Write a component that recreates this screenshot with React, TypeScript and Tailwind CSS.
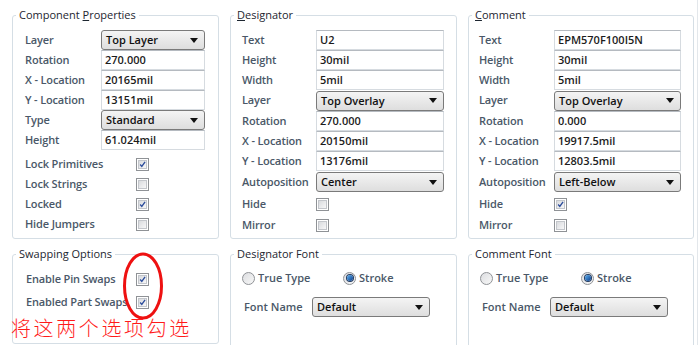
import type { ReactNode } from 'react';

function Field({ value }: { value: string }) {
  return (
    <div className="h-[20px] w-full border border-[#d6dbe0] border-t-[#b5bac0] bg-white px-[3px] text-[11px] leading-[18px] font-semibold text-[#1c1c1c]">
      {value}
    </div>
  );
}

function Dropdown({ value, width }: { value: string; width?: string }) {
  return (
    <div
      className={`flex h-[20px] items-center justify-between rounded-[3px] border border-[#7a7a7a] bg-gradient-to-b from-[#f4f4f4] to-[#dedede] pl-[4px] pr-[6px] text-[11px] font-semibold text-[#111] ${width ?? 'w-full'}`}
    >
      <span className="leading-[18px]">{value}</span>
      <svg width="8" height="5" viewBox="0 0 8 5">
        <path d="M0 0 H8 L4 5 Z" fill="#111" />
      </svg>
    </div>
  );
}

function Check({ checked }: { checked?: boolean }) {
  return (
    <div className="flex h-[13px] w-[13px] items-center justify-center border border-[#8f9296] bg-white">
      <div className="flex h-[9px] w-[9px] items-center justify-center border border-[#c3c6cb] bg-gradient-to-br from-[#d9dbde] to-[#f7f7f8]">
        {checked && (
          <svg width="9" height="9" viewBox="0 0 9 9">
            <path d="M1.5 4.5 L3.6 7 L7.8 1" fill="none" stroke="#2b4c9b" strokeWidth="1.7" />
          </svg>
        )}
      </div>
    </div>
  );
}

function Radio({ checked }: { checked?: boolean }) {
  return (
    <div className="flex h-[13px] w-[13px] items-center justify-center rounded-full border border-[#8f9296] bg-gradient-to-br from-[#dcdde0] to-[#f8f8f8]">
      {checked && <div className="h-[6px] w-[6px] rounded-full bg-gradient-to-br from-[#5eb0f0] to-[#0e3f8c] ring-1 ring-[#233a5e]" />}
    </div>
  );
}

function Row({ label, labelW, h = 'h-[20px]', children }: { label: string; labelW: string; h?: string; children: ReactNode }) {
  return (
    <div className={`flex items-center ${h}`}>
      <span className={`shrink-0 text-[11px] font-semibold tracking-[-0.15px] text-[#4a5868] ${labelW}`}>{label}</span>
      <div className="flex-1">{children}</div>
    </div>
  );
}

function Group({ title, className, inner, children }: { title: ReactNode; className: string; inner: string; children: ReactNode }) {
  return (
    <fieldset className={`shrink-0 rounded-[3px] border border-[#d5dee5] ${className}`}>
      <legend className="ml-[3px] px-[3px] text-[11px] leading-[16px] text-[#1d2630]">{title}</legend>
      <div className={inner}>{children}</div>
    </fieldset>
  );
}

function CheckRow({ label, labelW, checked, h = 'h-[20px]' }: { label: string; labelW: string; checked?: boolean; h?: string }) {
  return (
    <div className={`flex items-center ${h}`}>
      <span className={`shrink-0 text-[11px] font-semibold tracking-[-0.15px] text-[#4a5868] ${labelW}`}>{label}</span>
      <Check checked={checked} />
    </div>
  );
}

function FontGroup({ title, strokeX, ddW }: { title: string; strokeX: string; ddW: string }) {
  return (
    <Group title={title} className="mt-[7px] h-[120px]" inner="pl-[11px] pr-[12px] pt-[6px]">
      <div className="flex h-[20px] items-center text-[11px] font-semibold text-[#4a5868]">
        <div className={`flex items-center gap-[3px] ${strokeX}`}>
          <Radio />
          <span>True Type</span>
        </div>
        <div className="flex items-center gap-[3px]">
          <Radio checked />
          <span>Stroke</span>
        </div>
      </div>
      <div className="mt-[9px] flex h-[20px] items-center pl-[2px]">
        <span className="w-[68px] shrink-0 text-[11px] font-semibold text-[#4a5868]">Font Name</span>
        <Dropdown value="Default" width={ddW} />
      </div>
    </Group>
  );
}

function TextGroup({ title, values, pl, labelW }: { title: ReactNode; values: string[]; pl: string; labelW: string }) {
  const [text, height, width, rot, x, y, auto, hide] = values;
  return (
    <Group title={title} className="h-[232px]" inner={`${pl} pr-[12px] pt-[7px]`}>
      <Row label="Text" labelW={labelW}><Field value={text} /></Row>
      <Row label="Height" labelW={labelW}><Field value={height} /></Row>
      <Row label="Width" labelW={labelW}><Field value={width} /></Row>
      <Row label="Layer" labelW={labelW} h="h-[21px]"><Dropdown value="Top Overlay" /></Row>
      <Row label="Rotation" labelW={labelW}><Field value={rot} /></Row>
      <Row label="X - Location" labelW={labelW}><Field value={x} /></Row>
      <Row label="Y - Location" labelW={labelW}><Field value={y} /></Row>
      <Row label="Autoposition" labelW={labelW} h="h-[22px]"><Dropdown value={auto} /></Row>
      <div className="mt-[1px]">
        <CheckRow label="Hide" labelW={labelW} checked={hide === 'y'} h="h-[21px]" />
        <CheckRow label="Mirror" labelW={labelW} h="h-[21px]" />
      </div>
    </Group>
  );
}

export default function App() {
  return (
    <div className="relative h-[345px] w-[700px] overflow-hidden bg-white font-['Open_Sans','Noto_Sans_CJK_SC',sans-serif]">
      <div className="flex h-full w-[698px] gap-[11px] border-r border-[#e3e7eb] pl-[12px] pt-[7px]">
        {/* column 1 */}
        <div className="flex w-[207px] shrink-0 flex-col">
          <Group title={<>Component <u>P</u>roperties</>} className="h-[232px]" inner="pl-[12px] pr-[13px] pt-[7px]">
            <Row label="Layer" labelW="w-[76px]"><Dropdown value="Top Layer" /></Row>
            <Row label="Rotation" labelW="w-[76px]"><Field value="270.000" /></Row>
            <Row label="X - Location" labelW="w-[76px]"><Field value="20165mil" /></Row>
            <Row label="Y - Location" labelW="w-[76px]"><Field value="13151mil" /></Row>
            <Row label="Type" labelW="w-[76px]"><Dropdown value="Standard" /></Row>
            <Row label="Height" labelW="w-[76px]"><Field value="61.024mil" /></Row>
            <div className="mt-[4px]">
              <CheckRow label="Lock Primitives" labelW="w-[111px]" checked />
              <CheckRow label="Lock Strings" labelW="w-[111px]" />
              <CheckRow label="Locked" labelW="w-[111px]" checked />
              <CheckRow label="Hide Jumpers" labelW="w-[111px]" />
            </div>
          </Group>
          <Group title="Swapping Options" className="mt-[7px] h-[98px]" inner="pl-[13px] pt-[7px]">
            <CheckRow label="Enable Pin Swaps" labelW="w-[110px]" checked />
            <div className="mt-[3px]">
              <CheckRow label="Enabled Part Swaps" labelW="w-[110px]" checked />
            </div>
          </Group>
        </div>

        {/* column 2 */}
        <div className="flex w-[227px] shrink-0 flex-col">
          <TextGroup
            title={<><u>D</u>esignator</>}
            pl="pl-[11px]"
            labelW="w-[74px]"
            values={['U2', '30mil', '5mil', '270.000', '20150mil', '13176mil', 'Center', 'n']}
          />
          <FontGroup title="Designator Font" strokeX="w-[101px]" ddW="w-[118px]" />
        </div>

        {/* column 3 */}
        <div className="flex w-[226px] shrink-0 flex-col">
          <TextGroup
            title={<><u>C</u>omment</>}
            pl="pl-[10px]"
            labelW="w-[75px]"
            values={['EPM570F100I5N', '30mil', '5mil', '0.000', '19917.5mil', '12803.5mil', 'Left-Below', 'y']}
          />
          <FontGroup title="Comment Font" strokeX="w-[101px]" ddW="w-[118px]" />
        </div>
      </div>

      {/* annotation */}
      <svg className="absolute left-[121px] top-[251px]" width="44" height="70" viewBox="0 0 44 70">
        <ellipse cx="22" cy="35" rx="18.5" ry="32" fill="none" stroke="#ee1111" strokeWidth="3" />
      </svg>
      <div className="absolute left-[11px] top-[315px] font-['Noto_Sans_CJK_SC',sans-serif] text-[20px] font-light leading-[26px] tracking-[2.6px] text-[#ff1a1a]">
        将这两个选项勾选
      </div>
    </div>
  );
}
